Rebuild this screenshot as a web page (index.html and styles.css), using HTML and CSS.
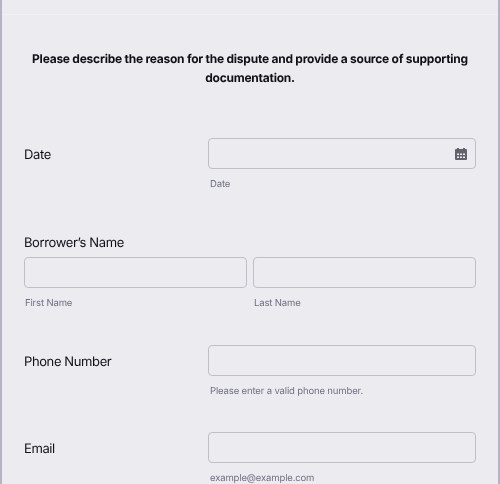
FILE: index.html
```html
<!DOCTYPE html>
<html lang="en">
<head>
<meta charset="utf-8">
<title>Dispute form</title>
<link rel="stylesheet" href="styles.css">
</head>
<body>
<main class="form">
  <div class="topbar"></div>
  <h1 class="heading">Please describe the reason for the dispute and provide a source of supporting documentation.</h1>

  <div class="row row-date">
    <div class="label">Date</div>
    <div class="control">
      <div class="input input-icon">
        <svg class="cal" viewBox="0 0 12 12" width="12" height="12" aria-hidden="true">
          <path fill="#62626f" fill-rule="evenodd" d="M2 0h2v1h4V0h2v1h1a1 1 0 0 1 1 1v9a1 1 0 0 1-1 1H1a1 1 0 0 1-1-1V2a1 1 0 0 1 1-1h1zM2 5.500v1.500h2V5.500zm3 0v1.500h2V5.500zm3 0v1.500h2V5.500zM2 8.500v1.500h2V8.500zm3 0v1.500h2V8.500zm3 0v1.500h2V8.500z"/>
        </svg>
      </div>
      <div class="hint">Date</div>
    </div>
  </div>

  <div class="stack">
    <div class="label">Borrower’s Name</div>
    <div class="pair">
      <div class="field"><div class="input"></div><div class="hint hint-tight">First Name</div></div>
      <div class="field"><div class="input"></div><div class="hint hint-tight">Last Name</div></div>
    </div>
  </div>

  <div class="row row-next">
    <div class="label">Phone Number</div>
    <div class="control">
      <div class="input"></div>
      <div class="hint">Please enter a valid phone number.</div>
    </div>
  </div>

  <div class="row row-next">
    <div class="label">Email</div>
    <div class="control">
      <div class="input"></div>
      <div class="hint">example@example.com</div>
    </div>
  </div>
</main>
</body>
</html>
```

FILE: styles.css
```css
html, body {
  margin: 0;
  padding: 0;
  height: 484px;
  overflow: hidden;
}
body {
  background: #ecebf0;
  font-family: Inter, "Liberation Sans", sans-serif;
  text-rendering: geometricPrecision;
}
.form {
  box-sizing: border-box;
  height: 484px;
  overflow: hidden;
  border-left: 2px solid #b4b3c8;
  border-right: 2px solid #b4b3c8;
  padding: 0 22px;
  filter: blur(0.25px);
}
.topbar {
  height: 14px;
  margin: 0 -22px;
  border-bottom: 1px solid #f1f0f4;
}
.heading {
  margin: 34px 0 0;
  font-size: 12px;
  letter-spacing: -0.02em;
  line-height: 19px;
  font-weight: 700;
  color: #0f1018;
  text-align: center;
}
.row {
  display: flex;
  align-items: flex-start;
}
.row-date { margin-top: 51px; }
.row-next { margin-top: 34.5px; }
.label {
  width: 184px;
  flex: none;
  font-size: 13px;
  letter-spacing: -0.03em;
  line-height: 34px;
  color: #0f1018;
}
.control { flex: 1; }
.input {
  box-sizing: border-box;
  height: 31px;
  border: 1px solid #bfbecb;
  border-radius: 4px;
  background: #ecebf0;
}
.input-icon {
  display: flex;
  align-items: center;
  justify-content: flex-end;
  padding-right: 8px;
}
.hint {
  margin: 10px 0 0 2px;
  font-size: 9.5px;
  letter-spacing: -0.015em;
  line-height: 12px;
  color: #6f7083;
}
.hint-tight { margin: 10px 0 0 1px; }
.stack { margin-top: 44px; }
.stack .label {
  width: auto;
  line-height: 16px;
}
.pair {
  display: flex;
  gap: 6px;
  margin-top: 6px;
}
.field { flex: 1; }
```
